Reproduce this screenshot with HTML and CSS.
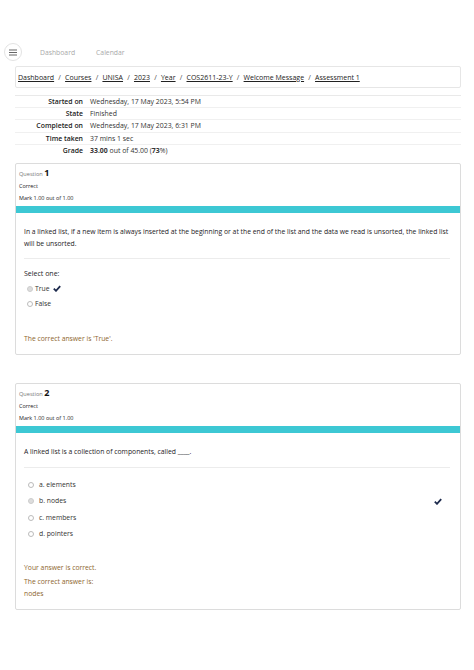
FILE: index.html
```html
<!DOCTYPE html>
<html>
<head>
<meta charset="utf-8">
<link rel="stylesheet" href="styles.css">
</head>
<body>
<div class="page">
  <nav class="nav">
    <span class="burger"><svg width="8" height="7" viewBox="0 0 8 7"><path d="M0 1h8M0 3.5h8M0 6h8" stroke="#666" stroke-width="1"/></svg></span>
    <span class="navlink">Dashboard</span>
    <span class="navlink">Calendar</span>
  </nav>
  <div class="main">
    <div class="crumbs">
      <a>Dashboard</a><span class="sep">/</span><a>Courses</a><span class="sep">/</span><a>UNISA</a><span class="sep">/</span><a>2023</a><span class="sep">/</span><a>Year</a><span class="sep">/</span><a>COS2611-23-Y</a><span class="sep">/</span><a>Welcome Message</a><span class="sep">/</span><a>Assessment 1</a>
    </div>
    <table class="summary">
      <tr><th>Started on</th><td>Wednesday, 17 May 2023, 5:54 PM</td></tr>
      <tr><th>State</th><td>Finished</td></tr>
      <tr><th>Completed on</th><td>Wednesday, 17 May 2023, 6:31 PM</td></tr>
      <tr><th>Time taken</th><td>37 mins 1 sec</td></tr>
      <tr><th>Grade</th><td><b>33.00</b> out of 45.00 (<b>73</b>%)</td></tr>
    </table>

    <div class="que q1">
      <div class="info">
        <div class="qno">Question <b>1</b></div>
        <div class="state">Correct</div>
        <div class="grade">Mark 1.00 out of 1.00</div>
      </div>
      <div class="bar"></div>
      <div class="content">
        <div class="qtext">In a linked list, if a new item is always inserted at the beginning or at the end of the list and the data we read is unsorted, the linked list will be unsorted.</div>
        <div class="ablock">
          <div class="prompt">Select one:</div>
          <div class="opt tf"><span class="radio checked"></span>True <svg class="tick" width="8" height="7" viewBox="0 0 8 7"><path d="M0.8 3.6L3 5.8L7.2 1.2" stroke="#1d2a4d" stroke-width="1.8" fill="none"/></svg></div>
          <div class="opt tf"><span class="radio"></span>False</div>
        </div>
        <div class="feedback">
          <div class="right">The correct answer is 'True'.</div>
        </div>
      </div>
    </div>

    <div class="que q2">
      <div class="info">
        <div class="qno">Question <b>2</b></div>
        <div class="state">Correct</div>
        <div class="grade">Mark 1.00 out of 1.00</div>
      </div>
      <div class="bar"></div>
      <div class="content">
        <div class="qtext">A linked list is a collection of components, called ____.</div>
        <div class="ablock mc">
          <div class="opt"><span class="radio"></span>a. elements</div>
          <div class="opt"><span class="radio checked"></span>b. nodes<svg class="tick end" width="8" height="7" viewBox="0 0 8 7"><path d="M0.8 3.6L3 5.8L7.2 1.2" stroke="#1d2a4d" stroke-width="1.8" fill="none"/></svg></div>
          <div class="opt"><span class="radio"></span>c. members</div>
          <div class="opt"><span class="radio"></span>d. pointers</div>
        </div>
        <div class="feedback">
          <div class="right">Your answer is correct.</div>
          <div class="right ca">The correct answer is:<br>nodes</div>
        </div>
      </div>
    </div>
  </div>
</div>
</body>
</html>
```
FILE: styles.css
```css
* { box-sizing: border-box; }
body {
  margin: 0;
  background: #fff;
  font-family: "Open Sans", "Noto Sans", sans-serif;
  color: #1d2125;
  font-size: 7px;
}
.page { width: 474px; }
.nav {
  display: flex;
  align-items: center;
  height: 24px;
  margin-top: 40px;
  padding-left: 4px;
}
.burger {
  width: 18px;
  height: 18px;
  border-radius: 50%;
  border: 1px solid #e3e3e3;
  display: flex;
  align-items: center;
  justify-content: center;
  margin-right: 18px;
}
.navlink {
  color: #a9a9a9;
  font-size: 6.8px;
  margin-right: 21px;
}
.main { padding: 0 13px 0 15px; }
.crumbs {
  margin-top: 2px;
  border: 1px solid #e6e6e6;
  border-radius: 2px;
  height: 22px;
  display: flex;
  align-items: center;
  padding-left: 2px;
  font-size: 7px;
  color: #333;
}
.crumbs a { text-decoration: underline; color: #222; }
.crumbs .sep { margin: 0 4.2px; color: #444; }
.summary {
  margin-top: 7px;
  width: 100%;
  border-collapse: collapse;
  border-top: 1px solid #e9e9e9;
  font-size: 6.9px;
}
.summary tr { border-bottom: 1px solid #f0f0f0; }
.summary tr:last-child { border-bottom: none; }
.summary th {
  width: 75px;
  text-align: right;
  font-weight: 600;
  padding: 0 7px 0 0;
  height: 12.2px;
  color: #222;
}
.summary td { padding: 0; color: #333; }
.summary td b { font-weight: 700; }
.que {
  border: 1px solid #dcdcdc;
  border-radius: 2px;
  margin-top: 7px;
}
.q2 { margin-top: 28px; }
.info { padding: 4px 3px 2px; }
.qno { font-size: 5.6px; color: #777; line-height: 10px; }
.qno b { font-size: 9px; color: #111; font-weight: 700; }
.state { font-size: 5.5px; line-height: 12px; margin-top: 1px; }
.grade { font-size: 5.5px; line-height: 12px; }
.bar { height: 7px; background: #3dc8d4; }
.content { padding: 13px 10px 9px 8px; }
.qtext {
  font-size: 6.8px;
  line-height: 11.5px;
  color: #1d2125;
  padding-bottom: 9px;
  border-bottom: 1px solid #ececec;
}
.ablock { padding-top: 9px; }
.prompt { font-size: 7px; line-height: 12px; margin-bottom: 1px; }
.opt {
  display: flex;
  align-items: center;
  font-size: 6.8px;
  line-height: 15px;
  color: #333;
}
.ablock.mc { padding-top: 9px; }
.ablock.mc .opt { line-height: 16.3px; padding-left: 4px; }
.tf { padding-left: 3px; }
.radio {
  width: 6px;
  height: 6px;
  border-radius: 50%;
  border: 1px solid #bbb;
  margin-right: 2px;
  display: inline-block;
}
.mc .radio { margin-right: 5px; }
.radio.checked { background: #ddd; border-color: #ccc; }
.tick { margin-left: 3px; }
.tick.end { margin-left: auto; margin-right: 8px; }
.feedback { padding-top: 22px; color: #8e662e; font-size: 6.8px; }
.right { line-height: 12px; }
.ca { margin-top: 2px; }
.q2 .feedback { padding-top: 20px; }
```
